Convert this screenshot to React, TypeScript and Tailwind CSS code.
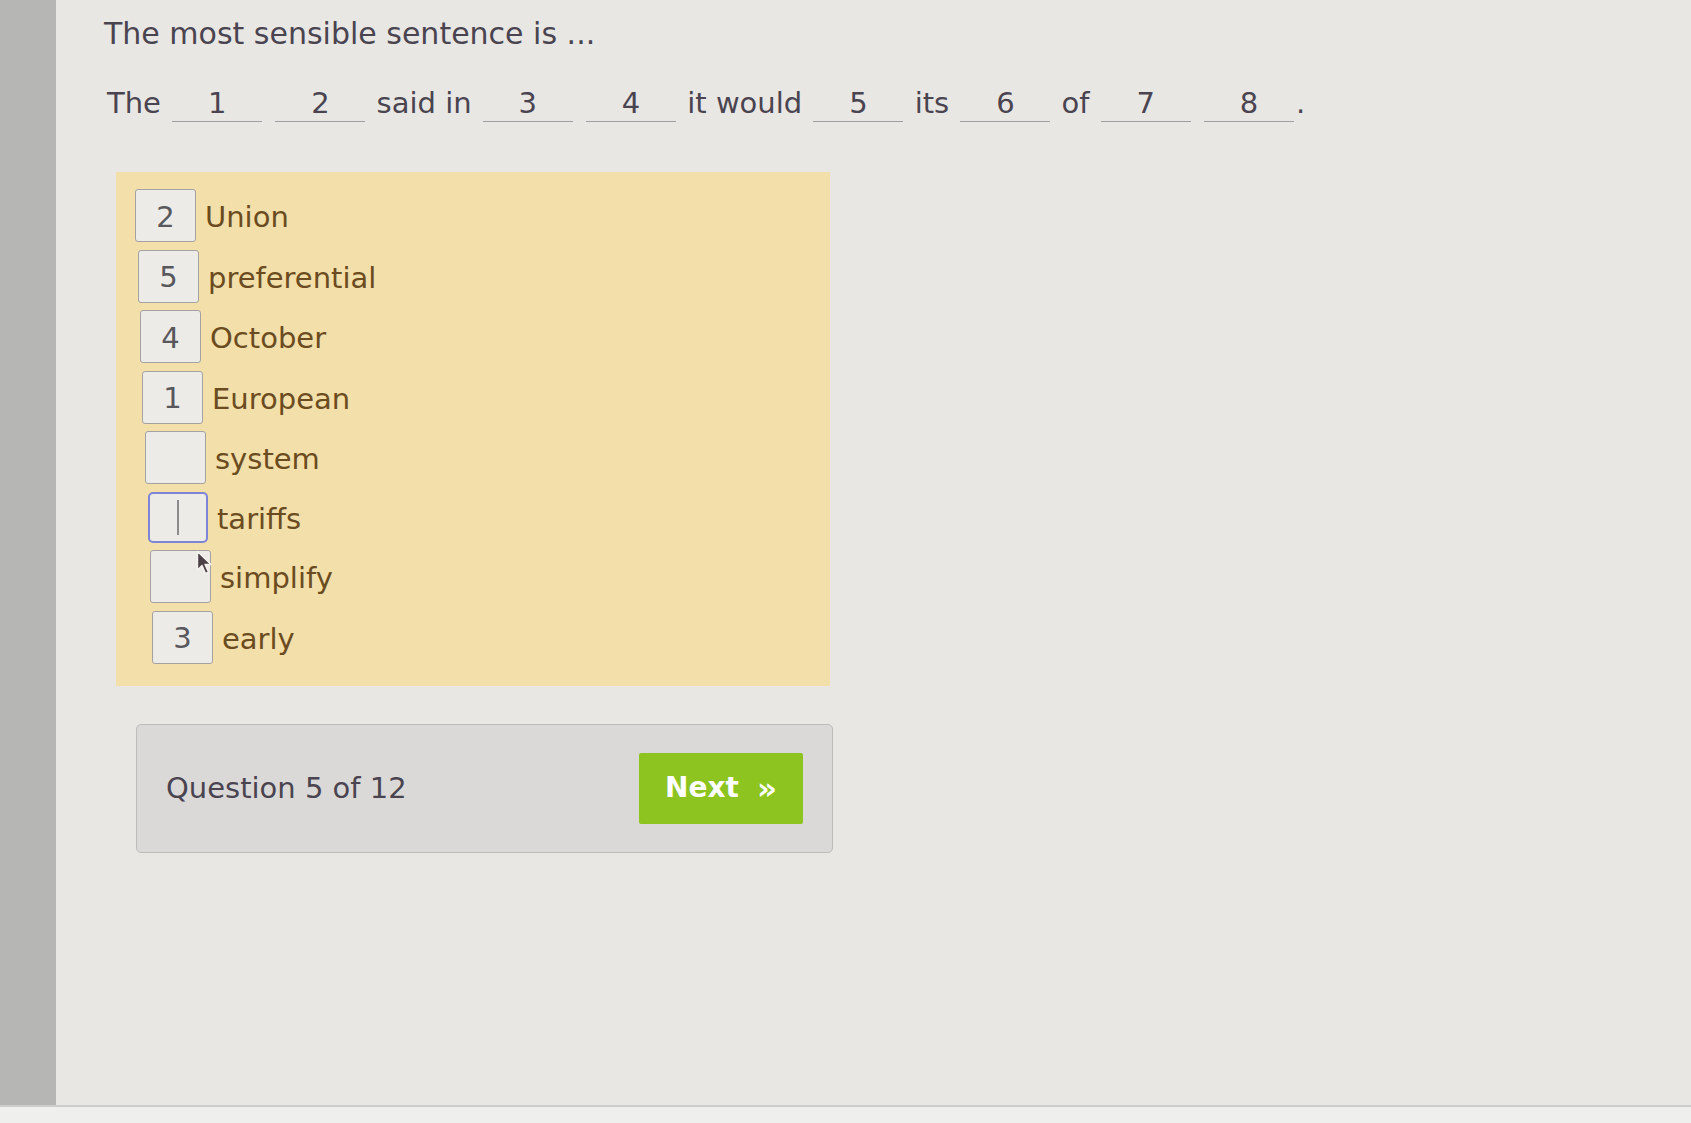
import React from 'react';

// rows of the word bank; indent follows the slight lean of the photo
const words = [
    { n: '2', word: 'Union', indent: 'ml-[0px]' },
    { n: '5', word: 'preferential', indent: 'ml-[3px]' },
    { n: '4', word: 'October', indent: 'ml-[5px]' },
    { n: '1', word: 'European', indent: 'ml-[7px]' },
    { n: '', word: 'system', indent: 'ml-[10px]' },
    { n: '', word: 'tariffs', indent: 'ml-[13px]', focused: true },
    { n: '', word: 'simplify', indent: 'ml-[15px]' },
    { n: '3', word: 'early', indent: 'ml-[17px]' },
];

const Blank: React.FC<{ n: string }> = ({ n }) => (
    <span className="mx-[2px] inline-block w-[90px] border-b-[1.5px] border-[#a09ea2] text-center">{n}</span>
);

const Cursor = () => (
    <svg width="18" height="26" viewBox="0 0 18 26" className="absolute left-[140px] top-[550px]">
        <path d="M1.5 1.5 L1.5 20 L6 15.5 L9.5 23.5 L12.5 22.2 L9 14.5 L15 14.5 Z" fill="#4a4046" stroke="#f4f2ee" strokeWidth="1.4" strokeLinejoin="round" />
    </svg>
);

export default function App() {
    return (
        <div className="flex h-[1123px] w-[1691px] flex-col overflow-hidden bg-[#e8e7e4] font-['DejaVu_Sans',sans-serif]">
            <div className="flex flex-1">
                <div className="w-[56px] bg-[#b6b6b4]" />
                <main className="relative flex-1 pl-[48px] pt-[16px]">
                    <h1 className="text-[30px] leading-[36px] text-[#4a4450]">The most sensible sentence is ...</h1>

                    <p className="ml-[3px] mt-[33px] whitespace-nowrap text-[29px] leading-[36px] text-[#4a4450]">
                        The <Blank n="1" /> <Blank n="2" /> said in <Blank n="3" /> <Blank n="4" /> it would <Blank n="5" /> its <Blank n="6" /> of <Blank n="7" /> <Blank n="8" />.
                    </p>

                    <div className="ml-[12px] mt-[50px] flex w-[714px] flex-col gap-[7.5px] bg-[#f2dfaa] pb-[22px] pl-[19px] pt-[17px]">
                        {words.map((w, i) => (
                            <div key={i} className={`flex items-center ${w.indent}`}>
                                {w.focused ? (
                                    <div className="flex h-[51px] w-[60px] items-center justify-center rounded-[5px] border-2 border-[#7e84d6] bg-[#ecebe8]">
                                        <div className="h-[35px] w-[1.5px] bg-[#8c8a8c]" />
                                    </div>
                                ) : (
                                    <div className="flex h-[53px] w-[61px] items-center justify-center rounded-[3px] border-[1.5px] border-[#a3a2a0] bg-[#ecebe8] pt-[2px] text-[29px] leading-[36px] text-[#58575c]">
                                        {w.n}
                                    </div>
                                )}
                                <span className="ml-[9px] pt-[3px] text-[29px] leading-[36px] text-[#6b4b20]">{w.word}</span>
                            </div>
                        ))}
                    </div>

                    <div className="ml-[32px] mt-[38px] flex h-[129px] w-[697px] items-center justify-between rounded-[5px] border border-[#bdbcba] bg-[#dad9d7] pl-[29px] pr-[29px]">
                        <span className="text-[29px] leading-[36px] text-[#4a4450]">Question 5 of 12</span>
                        <button className="flex h-[71px] w-[164px] items-center justify-center rounded-[2px] bg-[#8dc41f] text-[28px] font-bold leading-none text-white">
                            Next<span className="ml-[18px] text-[31px]">»</span>
                        </button>
                    </div>

                    <Cursor />
                </main>
            </div>
            <div className="h-[18px] border-t-2 border-[#cdcdcb] bg-[#efefee]" />
        </div>
    );
}
